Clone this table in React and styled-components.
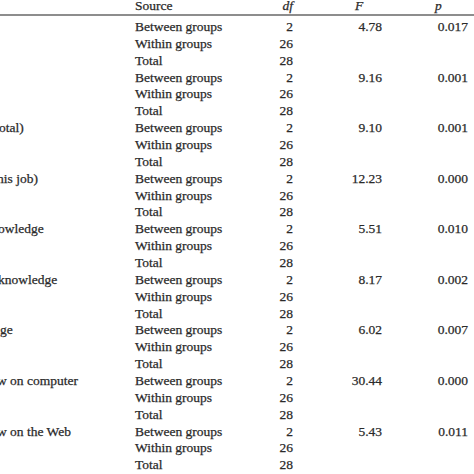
import React from 'react'
import styled, { createGlobalStyle } from 'styled-components'

// ANOVA rows, one block of three lines per variable
const GROUPS = [
  { label: '', shift: 0, F: '4.78', p: '0.017' },
  { label: '', shift: 0, F: '9.16', p: '0.001' },
  { label: 'otal)', shift: 1, F: '9.10', p: '0.001' },
  { label: 'his job)', shift: 3, F: '12.23', p: '0.000' },
  { label: 'owledge', shift: 2, F: '5.51', p: '0.010' },
  { label: 'knowledge', shift: 2, F: '8.17', p: '0.002' },
  { label: 'ge', shift: 0, F: '6.02', p: '0.007' },
  { label: 'w on computer', shift: 3, F: '30.44', p: '0.000' },
  { label: 'w on the Web', shift: 3, F: '5.43', p: '0.011' },
]

const LINES = [
  { source: 'Between groups', df: '2' },
  { source: 'Within groups', df: '26' },
  { source: 'Total', df: '28' },
]

export default function App() {
  return (
    <>
      <GlobalStyle />
      <Page>
        <HeaderRow>
          <Cell />
          <Cell>Source</Cell>
          <NumCell $italic>df</NumCell>
          <HeadCell $pad={62}>F</HeadCell>
          <HeadCell $pad={53}>p</HeadCell>
        </HeaderRow>
        <Body>
          {GROUPS.map((g, gi) =>
            LINES.map((line, li) => (
              <Row key={`${gi}-${li}`}>
                <LabelCell>
                  {li === 0 && g.label && <Label $shift={g.shift}>{g.label}</Label>}
                </LabelCell>
                <Cell>{line.source}</Cell>
                <NumCell>{line.df}</NumCell>
                <NumCell>{li === 0 ? g.F : ''}</NumCell>
                <NumCell $right={6}>{li === 0 ? g.p : ''}</NumCell>
              </Row>
            ))
          )}
        </Body>
      </Page>
    </>
  )
}

const GlobalStyle = createGlobalStyle`
  html, body {
    margin: 0;
    padding: 0;
    background: #ffffff;
    overflow: hidden;
  }
`

const Page = styled.div`
  width: 474px;
  height: 474px;
  overflow: hidden;
  font-family: "Liberation Serif", "Times New Roman", serif;
  color: #2a2a2a;
  -webkit-text-stroke: 0.25px #2a2a2a;
  font-size: 13.5px;
  line-height: 16.87px;
`

const RowBase = styled.div`
  display: grid;
  grid-template-columns: 135px 115px 43px 89px 1fr;
  white-space: nowrap;
`

const HeaderRow = styled(RowBase)`
  height: 11px;
  line-height: 11px;
  padding-bottom: 3px;
  border-bottom: 2px solid #8d8d8d;
`

const Body = styled.div`
  padding-top: 3px;
`

const Row = styled(RowBase)`
  height: 16.87px;
`

const Cell = styled.div``

const HeadCell = styled.div`
  font-style: italic;
  padding-left: ${p => p.$pad}px;
`

const NumCell = styled.div`
  text-align: right;
  font-style: ${p => (p.$italic ? 'italic' : 'normal')};
  padding-right: ${p => p.$right || 0}px;
`

const LabelCell = styled.div`
  overflow: hidden;
`

const Label = styled.span`
  display: inline-block;
  margin-left: -${p => p.$shift}px;
`
